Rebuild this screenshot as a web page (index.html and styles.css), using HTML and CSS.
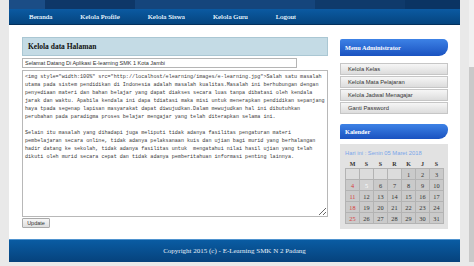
FILE: index.html
```html
<!DOCTYPE HTML>
<html>
<head>
<meta charset="utf-8">
<title>Kelola data Halaman</title>
<link rel="stylesheet" href="styles.css">
</head>

<body>
<div class="page">
<div class="wrap">
	<div class="banner">
		<span class="b1"></span><span class="b2"></span><span class="b3"></span><span class="b4"></span><span class="b5"></span>
	</div>
	<ul class="nav">
		<li>Beranda</li>
		<li>Kelola Profile</li>
		<li>Kelola Siswa</li>
		<li>Kelola Guru</li>
		<li>Logout</li>
	</ul>
	<div class="content">
		<div class="main">
			<div class="boxtitle">Kelola data Halaman</div>
			<input type="text" class="judul" value="Selamat Datang Di Aplikasi E-learning SMK 1 Kota Jambi">
			<textarea class="isi" wrap="off">&lt;img style="width:100%" src="http://localhost/elearning/images/e-learning.jpg"&gt;Salah satu masalah
utama pada sistem pendidikan di Indonesia adalah masalah kualitas.Masalah ini berhubungan dengan
penyediaan materi dan bahan belajar yang dapat diakses secara luas tanpa dibatasi oleh kendala
jarak dan waktu. Apabila kendala ini dapa tdiatasi maka misi untuk menerapkan pendidikan sepanjang
haya tpada segenap lapisan masyarakat dapat diwujudkan.Dalam mewujudkan hal ini dibutuhkan
perubahan pada paradigma proses belajar mengajar yang telah diterapkan selama ini.

Selain itu masalah yang dihadapi juga meliputi tidak adanya fasilitas pengaturan materi
pembelajaran secara online, tidak adanya pelaksanaan kuis dan ujian bagi murid yang berhalangan
hadir datang ke sekolah, tidak adanya fasilitas untuk  mengatahui nilai hasil ujian yang telah
dikuti oleh murid secara cepat dan tidak adanya pemberitahuan informasi penting lainnya.</textarea>
			<input type="button" class="btn" value="Update">
		</div>
		<div class="side">
			<div class="sidehead">Menu Administrator</div>
			<ul class="menu">
				<li>Kelola Kelas</li>
				<li>Kelola Mata Pelajaran</li>
				<li>Kelola Jadwal Menagajar</li>
				<li>Ganti Password</li>
			</ul>
			<div class="sidehead kal">Kalender</div>
			<div class="calendar">
				<div class="today">Hari ini : Senin 05 Maret 2018</div>
				<table class="cal">
					<tr><th>M</th><th>S</th><th>S</th><th>R</th><th>K</th><th>J</th><th>S</th></tr>
					<tr><td class="empty"></td><td class="empty"></td><td class="empty"></td><td class="empty"></td><td>1</td><td>2</td><td>3</td></tr>
					<tr><td class="sun">4</td><td class="now">5</td><td>6</td><td>7</td><td>8</td><td>9</td><td>10</td></tr>
					<tr><td class="sun">11</td><td>12</td><td>13</td><td>14</td><td>15</td><td>16</td><td>17</td></tr>
					<tr><td class="sun">18</td><td>19</td><td>20</td><td>21</td><td>22</td><td>23</td><td>24</td></tr>
					<tr><td class="sun">25</td><td>26</td><td>27</td><td>28</td><td>29</td><td>30</td><td>31</td></tr>
				</table>
			</div>
		</div>
	</div>
	<div class="footer">Copyright 2015 (c) - E-Learning SMK N 2 Padang</div>
</div>
<div class="scroll"><div class="track"></div><div class="thumb"></div></div>
</div>
</body>
</html>
```

FILE: styles.css
```css
body { margin:0; background:#e9e9e9; font-family:"Liberation Serif", serif;}
ul,li { list-style:none; margin:0; padding:0;}
.page { display:flex; height:266px; overflow:hidden;}
.wrap { width:451px; margin-left:9px; display:flex; flex-direction:column;}
.scroll { width:5px; margin-left:9px; display:flex; flex-direction:column;}
.scroll .track { height:67px; background:#f1f1f1;}
.scroll .thumb { flex:1; background:#c9c9c9; margin-bottom:4px;}

.banner { height:9px; display:flex; background:#123f72;}
.banner span { display:block; height:9px;}
.banner .b1 { width:36px; background:#1b4d86;}
.banner .b2 { width:90px; background:#0e3768;}
.banner .b3 { width:180px; background:#15457c;}
.banner .b4 { width:90px; background:#0f3a6b;}
.banner .b5 { flex:1; background:#0b3463;}

.nav { height:15px; display:flex; align-items:center; padding-left:6px; background:linear-gradient(#0b5aa2,#05457f); border-bottom:1px solid #03305c;}
.nav li { padding:0 14px; font-size:7px; color:#dbe8f6; text-shadow:0 0 0.4px #dbe8f6;}

.content { flex:1; background:#fff; display:flex; gap:12px; padding:12px 0 0 13px;}
.main { width:306px;}
.boxtitle { height:17px; line-height:17px; background:#c4dbe5; border:1px solid #aac7d3; padding-left:5px; font-size:7.5px; font-weight:bold; color:#111;}
.judul { display:block; box-sizing:border-box; width:275px; height:10px; margin:2px 0 0; padding:0 2px; border:1px solid #b5b5b5; font-family:"Liberation Sans", sans-serif; font-size:5.5px; color:#333;}
.isi { display:block; box-sizing:border-box; width:306px; height:147px; margin:2px 0 0; padding:2px 2px; border:1px solid #b8b8b8; font-family:"Liberation Mono", monospace; font-size:5.1px; line-height:8px; color:#3a3a3a; overflow:hidden; white-space:pre;}
.btn { display:block; margin:1px 0 0; height:10px; width:28px; padding:0; font-family:"Liberation Sans", sans-serif; font-size:5.5px; color:#333; background:linear-gradient(#f6f6f6,#dedede); border:1px solid #aaa; border-radius:1px;}

.side { width:108px; padding-top:2px;}
.sidehead { height:17px; line-height:17px; padding-left:5px; color:#fff; font-size:6.3px; font-weight:bold; background:linear-gradient(#3d82e6,#1a52c0); border-radius:2px 5px 9px 0;}
.sidehead.kal { height:15px; line-height:15px; margin-top:10px;}
.menu { margin-top:7px;}
.menu li { box-sizing:border-box; height:12px; line-height:11px; margin-bottom:1px; padding-left:7px; border:1px solid #c6c6c6; background:linear-gradient(#f6f6f6,#dcdcdc); font-family:"Liberation Sans", sans-serif; font-size:5.8px; color:#333;}
.calendar { margin-top:5px; background:#e2e2e2; padding:4px 4px 5px 5px;}
.today { font-family:"Liberation Sans", sans-serif; font-size:5.8px; color:#7aa6ea; line-height:9px; padding-top:1px;}
.cal { border-collapse:collapse; width:99px; margin-top:1px;}
.cal th { font-size:6px; font-weight:bold; color:#333; height:9px; padding:0;}
.cal td { width:14px; height:10px; padding:0; text-align:center; font-size:6.3px; color:#333; background:#cacaca; border:1px solid #b3b3b3;}
.cal td.empty { background:#dcdcdc;}
.cal td.sun { color:#d63b3b;}
.cal td.now { color:#fff; background:#d2d2d2;}

.footer { height:22px; line-height:22px; margin-bottom:4px; text-align:center; font-size:7px; color:#e6eef7; background:linear-gradient(#0a5ca3,#06427c); border-top:1px solid #4f93cf;}
```
